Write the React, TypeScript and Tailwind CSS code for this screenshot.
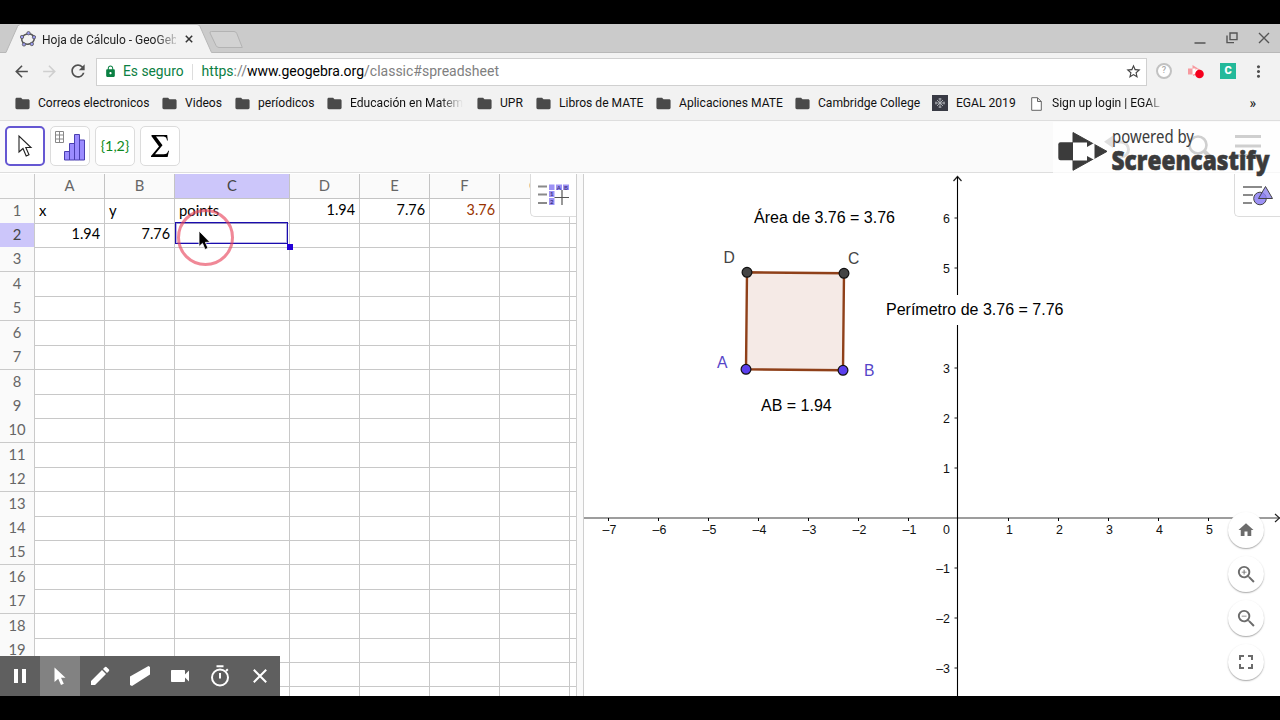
import type { ReactNode } from 'react'
import { MdArrowBack, MdArrowForward, MdFolder, MdFullscreen, MdHome, MdLock, MdMoreVert, MdPause, MdRefresh, MdStarBorder, MdVideocam, MdZoomIn, MdZoomOut } from 'react-icons/md'

const bookmarks = [
    { label: 'Correos electronicos', width: 'w-[147px]' },
    { label: 'Videos', width: 'w-[73px]' },
    { label: 'períodicos', width: 'w-[92px]' },
    { label: 'Educación en Matem', width: 'w-[150px]', fade: true },
    { label: 'UPR', width: 'w-[59px]' },
    { label: 'Libros de MATE', width: 'w-[120px]' },
    { label: 'Aplicaciones MATE', width: 'w-[139px]' },
    { label: 'Cambridge College', width: 'w-[137px]' },
]

const columns = ['A', 'B', 'C', 'D', 'E', 'F', 'G']

const cells: Record<string, { value: string; className?: string }> = {
    A1: { value: 'x' },
    B1: { value: 'y' },
    C1: { value: 'points' },
    D1: { value: '1.94', className: 'justify-end text-[14.4px]' },
    E1: { value: '7.76', className: 'justify-end text-[14.4px]' },
    F1: { value: '3.76', className: 'justify-end text-[14.4px] text-[#993300]' },
    A2: { value: '1.94', className: 'justify-end text-[14.4px]' },
    B2: { value: '7.76', className: 'justify-end text-[14.4px]' },
}

const rowGrid = 'grid grid-cols-[35px_70px_70px_115px_70px_70px_70px_70px_7px]'

// Rows are 24.42px apart; whole-pixel heights keep the grid lines even
const rowHeight = (row: number) => Math.floor(0.1 + 24.42 * row) - Math.floor(0.1 + 24.42 * (row - 1))

function TabStrip() {
    return (
        <div className="relative h-[29px] shrink-0 bg-[#cbcbcb]">
            <svg className="absolute inset-0" width="1280" height="30" viewBox="0 0 1280 30">
                <path d="M0 28.5H6L17.5 2.5Q18.3 .5 20.5 .5H197Q199 .5 200 2.5L211.5 28.5H1280V30H0Z" fill="#f2f2f2" />
                <path d="M0 28.5H6L17.5 2.5Q18.3 .5 20.5 .5H197Q199 .5 200 2.5L211.5 28.5H1280" fill="none" stroke="#b8b8b8" />
                <path d="M211.5 7.5H234Q236 7.5 236.8 9.5L242.3 23.5H219Q217 23.5 216 21.5L210 9Q209.5 7.5 211.5 7.5Z" fill="#d2d2d2" stroke="#b3b3b3" />
            </svg>
            <div className="relative flex h-full items-center pl-5">
                <svg width="16" height="16" viewBox="0 0 16 16" className="shrink-0">
                    <ellipse cx="8" cy="8" rx="6.3" ry="5.2" fill="none" stroke="#555" strokeWidth="1.5" transform="rotate(-12 8 8)" />
                    {[[8.5, 2.2], [14, 6.2], [11.8, 13], [4, 13.4], [2, 6]].map(([x, y]) => (
                        <circle key={x} cx={x} cy={y} r="1.7" fill="#9999ee" stroke="#555" strokeWidth=".8" />
                    ))}
                </svg>
                <span className="ml-[6px] mt-[2px] w-[134px] overflow-hidden whitespace-nowrap text-[12px] text-[#222] [mask-image:linear-gradient(to_right,black_85%,#0003)]">
                    Hoja de Cálculo - GeoGeb
                </span>
                <svg className="ml-[9px] mt-[1px]" width="8" height="8" viewBox="0 0 8 8" stroke="#333" strokeWidth="1.5">
                    <path d="M.8 .8 7.2 7.2M7.2 .8 .8 7.2" />
                </svg>
                <div className="ml-auto flex items-center gap-5 pr-[10px]">
                    <svg width="12" height="12" viewBox="0 0 12 12">
                        <path d="M.5 10H11.5" stroke="#555" strokeWidth="1.5" />
                    </svg>
                    <svg width="12" height="12" viewBox="0 0 12 12" fill="none" stroke="#555" strokeWidth="1.4" className="mb-[2px]">
                        <path d="M4 1H11V7.6H4ZM1 3.5V10.6H8" />
                    </svg>
                    <svg width="12" height="12" viewBox="0 0 12 12" stroke="#555" strokeWidth="1.4" className="mb-[2px]">
                        <path d="M1 1 11 11M11 1 1 11" />
                    </svg>
                </div>
            </div>
        </div>
    )
}

function AddressBar() {
    return (
        <div className="flex h-[36px] shrink-0 items-center bg-[#f2f2f2] pl-3">
            <MdArrowBack size={19} className="text-[#505050]" />
            <MdArrowForward size={19} className="ml-[9px] text-[#cfcfcf]" />
            <MdRefresh size={20} className="ml-[9px] text-[#505050]" />
            <div className="ml-2 mt-px flex h-7 w-[1051px] shrink-0 items-center border border-[#d0d0d0] bg-white pl-[7px] text-[14px]">
                <MdLock size={13} className="text-[#0b8043]" />
                <span className="ml-[6px] text-[13.8px] text-[#0b8043]">Es seguro</span>
                <span className="ml-2 mr-[9px] h-4 w-px bg-[#ddd]" />
                <span className="whitespace-nowrap text-[#808080]">
                    <span className="text-[#0b8043]">https</span>://<span className="text-black">www.geogebra.org</span>/classic#spreadsheet
                </span>
                <MdStarBorder size={17} className="ml-auto mr-[4px] text-[#444]" />
            </div>
            <div className="ml-[9px] flex h-4 w-4 items-center justify-center rounded-full border-2 border-[#c2c2c2] bg-white text-[9px] font-medium text-[#aaa]">?</div>
            <svg className="ml-4" width="17" height="16" viewBox="0 0 17 16">
                <path d="M0 5.5H4.5V2L12.5 7V10L5 13V11.5H0Z" fill="#f79a9f" />
                <path d="M4.5 5.5H7.5V7L9.5 5.5V10L5 11.5H4.5Z" fill="#fff" />
                <circle cx="11.5" cy="11" r="4.3" fill="#f5001d" />
            </svg>
            <div className="ml-[15px] flex h-4 w-4 items-center justify-center bg-[#23b99a] text-[11px] font-black text-white">C</div>
            <MdMoreVert size={19} className="ml-[13px] text-[#505050]" />
        </div>
    )
}

function BookmarksBar() {
    return (
        <div className="flex h-[31px] shrink-0 items-center bg-[#f2f2f2] pb-[2px] pl-[14px] text-[12.1px] text-[#111]">
            {bookmarks.map((b) => (
                <div key={b.label} className={`flex shrink-0 items-center ${b.width}`}>
                    <MdFolder size={17} className="shrink-0 text-[#4a4a4a]" />
                    <span className={`ml-[7px] whitespace-nowrap ${b.fade ? '[mask-image:linear-gradient(to_right,black_80%,transparent)]' : ''}`}>{b.label}</span>
                </div>
            ))}
            <div className="ml-[1px] flex w-[99px] shrink-0 items-center">
                <svg width="16" height="16" viewBox="0 0 16 16">
                    <path d="M0 0H16V16H0Z" fill="#393b45" />
                    <g stroke="#b4b8bc" strokeWidth=".9" fill="none">
                        <path d="M8 3V13M3 8H13M6.5 4H9.5M6.5 12H9.5M4 6.5V9.5M12 6.5V9.5M5 5L11 11M11 5L5 11" />
                    </g>
                </svg>
                <span className="ml-2">EGAL 2019</span>
            </div>
            <svg width="11" height="14" viewBox="0 0 11 14" fill="#fff" stroke="#666">
                <path d="M.7 .7H6.5L10.3 4.5V13.3H.7ZM6.5 .7V4.5H10.3" />
            </svg>
            <span className="ml-[10px] w-[112px] overflow-hidden whitespace-nowrap [mask-image:linear-gradient(to_right,black_85%,transparent)]">Sign up login | EGAL</span>
            <span className="ml-auto pr-[24px] text-[14px]">»</span>
        </div>
    )
}

function ToolButton({ children, active }: { children: ReactNode; active?: boolean }) {
    return (
        <div className={`flex h-10 w-10 items-center justify-center rounded-[5px] bg-white ${active ? 'border-2 border-[#6557d2]' : 'border border-[#dcdcdc]'}`}>
            {children}
        </div>
    )
}

function AppToolbar() {
    return (
        <div className="flex h-[53px] shrink-0 items-center gap-[5px] border-y border-[#dedede] bg-[#fafafa] pb-[2px] pl-[5px]">
            <ToolButton active>
                <svg width="16" height="24" viewBox="0 0 16 24" fill="#fff" stroke="#222" strokeWidth="1.1">
                    <path d="M2 2V18L6 14.5L9.2 22L12 20.8L8.8 13.5H14Z" />
                </svg>
            </ToolButton>
            <ToolButton>
                <svg width="32" height="32" viewBox="0 0 32 32">
                    <path d="M1.5 1.5H9.5V12.5H1.5ZM5.5 1.5V12.5M1.5 5H9.5M1.5 9H9.5" fill="none" stroke="#888" />
                    <path d="M10.5 21.5H15.5V30H10.5ZM15.5 13.5H20.5V30H15.5ZM20.5 4.5H25.5V30H20.5ZM25.5 10H30.5V30H25.5Z" fill="#9b8cff" stroke="#4a3fb0" />
                </svg>
            </ToolButton>
            <ToolButton>
                <span className="font-['Lato',sans-serif] text-[14.3px] text-[#0e8a20]">{'{1,2}'}</span>
            </ToolButton>
            <ToolButton>
                <svg width="20" height="24" viewBox="0 0 20 24">
                    <path d="M1.5 1H17.2L17.8 6.5H17C16.5 3.5 15.5 2.6 12.5 2.6H6L12.5 11.2L5 20.3H13.5C16.5 20.3 17.5 19.2 18.2 16.8H19L17.6 23H1V22L9 12.5L1.5 2.2Z" fill="#000" />
                </svg>
            </ToolButton>
        </div>
    )
}

// Recorder logo lying over the right end of the toolbar, with the toolbar's own icons dimmed under it
function Watermark() {
    return (
        <svg className="absolute left-[1053px] top-[98px]" width="227" height="64" viewBox="0 0 227 64">
            <path d="M0 0H227V52H0Z" fill="#fff" fillOpacity=".75" />
            <g fill="none" stroke="#cfcfcf">
                <path d="M61 20H68A7.5 7.5 0 0 1 68 35H60" stroke="#dedede" strokeWidth="3" />
                <path d="M60 13.5V26L51 19.8Z" fill="#dedede" stroke="none" />
                <circle cx="145" cy="23" r="8.5" strokeWidth="2.6" />
                <path d="M151 29L161 39" strokeWidth="4" />
                <path d="M182 14.5H208M182 24H208M182 33.5H208" strokeWidth="2.8" />
            </g>
            <path d="M20 10.5L54 29.4L20 48.3Z" fill="#3b3b3b" stroke="#3b3b3b" strokeLinejoin="round" />
            <path d="M20 20.5H34V25L41.5 20.8V38L34 34V38.5H20Z" fill="#fff" />
            <path d="M7.5 20.2H20V38.3H7.5Q5.3 38.3 5.3 36V22.5Q5.3 20.2 7.5 20.2Z" fill="#3b3b3b" />
            <g fill="#3b3b3b">
                <text x="59" y="21.2" fontSize="17.5" textLength="82" lengthAdjust="spacingAndGlyphs" fontFamily="Noto Sans, sans-serif">powered by</text>
                <text x="58.5" y="47.8" fontSize="26" fontWeight="800" stroke="#3b3b3b" strokeWidth=".6" textLength="158" lengthAdjust="spacingAndGlyphs" fontFamily="Open Sans, Noto Sans, sans-serif">Screencastify</text>
            </g>
        </svg>
    )
}

function Spreadsheet() {
    return (
        <div className="relative w-[577px] shrink-0 overflow-hidden border-r border-[#cfcfcf] bg-white font-['Lato',sans-serif] text-[14.8px] text-black">
            <div className={`${rowGrid} h-[25px] bg-[#fafafa] text-[#666]`}>
                <span className="border-b border-r border-[#cacaca]" />
                {columns.map((c) => (
                    <span key={c} className={`flex items-center justify-center border-b border-r border-[#c4c4c4] pb-[2px] ${c === 'C' ? 'bg-[#ccc6fa] text-[#444]' : ''}`}>{c}</span>
                ))}
                <span className="border-b border-[#c8c8c8]" />
            </div>
            {Array.from({ length: 21 }, (_, i) => i + 1).map((row) => (
                <div key={row} className={rowGrid} style={{ height: rowHeight(row) }}>
                    <span className={`flex items-center justify-center border-b border-r border-[#cacaca] pb-[2px] ${row === 2 ? 'bg-[#ccc6fa] text-[#444]' : 'bg-[#fafafa] text-[#666]'}`}>{row < 20 ? row : ''}</span>
                    {columns.map((c) => {
                        const cell = cells[c + row]
                        return (
                            <span key={c} className={`flex items-center border-b border-r border-[#c8c8c8] px-1 pb-[2px] ${cell?.className ?? ''}`}>
                                {cell?.value}
                            </span>
                        )
                    })}
                    <span className="border-b border-[#c8c8c8]" />
                </div>
            ))}

            {/* Selected cell, click ring and pointer */}
            <div className="absolute left-[175px] top-[48px] h-[22px] w-[113px] border border-[#1a0cae] outline outline-[#1a0cae]/30 -outline-offset-2" />
            <div className="absolute left-[287px] top-[70px] h-[6px] w-[6px] bg-[#2300d8]" />
            <div className="absolute left-[177px] top-[35px] h-[57px] w-[57px] rounded-full border-[3px] border-[#e84860]/65" />
            <svg className="absolute left-[198px] top-[56px]" width="13" height="21" viewBox="0 0 13 21">
                <path d="M1 1V16.5L4.5 13.3L7 19.5L10 18.2L7.4 12.3H12Z" fill="#000" stroke="#fff" strokeWidth=".8" />
            </svg>
            <div className="absolute right-0 top-0 flex h-[43px] w-[46px] items-center justify-center rounded-bl-[5px] border-b border-l border-[#dcdcdc] bg-white">
                <svg width="32" height="24" viewBox="0 0 32 24">
                    <path d="M0 3.5H9M0 11.5H9M0 20H9" stroke="#8a8a8a" strokeWidth="2" />
                    <path d="M11 1.5H16.5V7H11ZM18 1.5H24V7H18ZM25 1.5H31V7H25ZM11 8H16.5V14H11ZM11 15H16.5V22H11Z" fill="#9d92f5" />
                    <g fontSize="6" fontWeight="700" fill="#3d3689">
                        <text x="18.8" y="6.5">A</text>
                        <text x="26" y="6.5">B</text>
                        <text x="12" y="13.2">1</text>
                        <text x="12" y="20.8">2</text>
                    </g>
                    <path d="M24 7V22M16.5 14.5H31" stroke="#555" strokeWidth="1.2" />
                </svg>
            </div>
        </div>
    )
}

const xTicks = [-7, -6, -5, -4, -3, -2, -1, 1, 2, 3, 4, 5]
const yTicks = [6, 5, 3, 2, 1, -1, -2, -3]
const tickLabel = (n: number) => (n < 0 ? `–${-n}` : `${n}`)

function Graph() {
    // Origin of the axes inside the panel, 50px per unit
    const ox = 373.5
    const oy = 344
    return (
        <svg width="696" height="522" viewBox="0 0 696 522" className="block font-['Liberation_Sans',Arial,sans-serif]">
            <path d={`M0 ${oy}H696`} stroke="#3c3c3c" strokeWidth="1.2" />
            <path d={`M691 ${oy - 4}L695.5 ${oy}L691 ${oy + 4}M${ox - 4} 7L${ox} 2.5L${ox + 4} 7`} fill="none" stroke="#222" strokeWidth="1.2" />
            <path d={`M${ox} 3V121M${ox} 151V522`} stroke="#000" strokeWidth="1.1" />
            <g fontSize="12.4" fill="#111">
                {xTicks.map((n) => (
                    <g key={n}>
                        <path d={`M${ox + 1 + n * 50} ${oy}V${oy + 3}`} stroke="#000" />
                        <text x={ox + 2 + n * 50} y={oy + 16} textAnchor="middle">{tickLabel(n)}</text>
                    </g>
                ))}
                {yTicks.map((n) => (
                    <g key={n}>
                        <path d={`M${ox - 3} ${oy - n * 50}H${ox}`} stroke="#222" />
                        <text x={ox - 7.5} y={oy + 4.5 - n * 50} textAnchor="end">{tickLabel(n)}</text>
                    </g>
                ))}
                <text x={ox - 7.5} y={oy + 16} textAnchor="end">0</text>
            </g>
            <path d="M162 195.3L259 196.3L260 99.3L163 98.3Z" fill="#f5eae6" stroke="#8f4019" strokeWidth="2.4" />
            <g stroke="#111" strokeWidth="1.2">
                <circle cx="162" cy="195.3" r="4.9" fill="#5b3fee" />
                <circle cx="259" cy="196.3" r="4.9" fill="#5b3fee" />
                <circle cx="260" cy="99.3" r="4.9" fill="#444" />
                <circle cx="163" cy="98.3" r="4.9" fill="#444" />
            </g>
            <g fontSize="15.7">
                <text x="139.5" y="88.5" fill="#444">D</text>
                <text x="264" y="89.8" fill="#444">C</text>
                <text x="133" y="193.7" fill="#5645c8">A</text>
                <text x="280" y="201.5" fill="#5645c8">B</text>
            </g>
            <g fontSize="16" fill="#000">
                <text x="170" y="48.5">Área de 3.76 = 3.76</text>
                <text x="302" y="140.5">Perímetro de 3.76 = 7.76</text>
                <text x="177" y="236.5">AB = 1.94</text>
            </g>
        </svg>
    )
}

function GraphPanel() {
    return (
        <div className="relative flex-1 overflow-hidden bg-white">
            <Graph />
            <div className="absolute right-0 top-0 flex h-[43px] w-[46px] items-center rounded-bl-[5px] border-b border-l border-[#dcdcdc] bg-white pl-2">
                <svg width="32" height="24" viewBox="0 0 32 24" stroke="#444">
                    <path d="M0 4H19M0 12H10M0 20H9" stroke="#8a8a8a" strokeWidth="2" />
                    <circle cx="17" cy="15.5" r="6.3" fill="#9d92f5" />
                    <path d="M22.5 3.5L29.5 15.5H15.5Z" fill="#8d82ed" fillOpacity=".8" />
                </svg>
            </div>
            <div className="absolute bottom-[16px] right-[16px] flex flex-col gap-[8px] text-[#6c6c6c]">
                {[MdHome, MdZoomIn, MdZoomOut, MdFullscreen].map((Icon, i) => (
                    <div key={i} className="flex h-9 w-9 items-center justify-center rounded-full bg-white shadow-[0_1px_1.5px_rgba(0,0,0,0.35)]">
                        <Icon size={i === 0 ? 18 : i === 3 ? 24 : 23} />
                    </div>
                ))}
            </div>
        </div>
    )
}

function RecorderBar() {
    const icons = [
        <MdPause size={24} />,
        <svg width="12" height="19" viewBox="0 0 12 19" fill="#fff"><path d="M.5 .5V15L4.2 11.8L7 18L9.8 16.8L7 10.8H11.5Z" /></svg>,
        <svg width="20" height="20" viewBox="0 0 20 20" fill="#fff"><path d="M1 15L12 4L16 8L5 19H1ZM13 3L15 1Q15.7 .5 16.4 1L19 3.6Q19.5 4.3 19 5L17 7Z" /></svg>,
        <svg width="20" height="20" viewBox="0 0 20 20" fill="#fff"><path d="M0 10.5L18.5 0L20 1V8.5L2 20L0 19Z" /></svg>,
        <MdVideocam size={24} />,
        <svg width="20" height="22" viewBox="0 0 20 22" fill="none" stroke="#fff" strokeWidth="2"><circle cx="10" cy="12.5" r="8" /><path d="M6.5 1.2H13.5M10 8V13.5M16 6L17.8 4.2" /></svg>,
        <svg width="14" height="14" viewBox="0 0 14 14" stroke="#fff" strokeWidth="2"><path d="M.8 .8 13.2 13.2M13.2 .8 .8 13.2" /></svg>,
    ]
    return (
        <div className="absolute bottom-0 left-0 flex h-10 w-[280px] bg-[#5f5f5f] text-white">
            {icons.map((icon, i) => (
                <div key={i} className={`flex h-10 w-10 items-center justify-center ${i === 1 ? 'bg-[#828282]' : ''}`}>{icon}</div>
            ))}
        </div>
    )
}

export default function App() {
    return (
        <div className="h-[720px] w-[1280px] overflow-hidden bg-black py-6 font-['Roboto',sans-serif]">
            <div className="relative flex h-[672px] flex-col overflow-hidden bg-white">
                <TabStrip />
                <AddressBar />
                <BookmarksBar />
                <AppToolbar />
                <div className="flex min-h-0 flex-1 pt-px">
                    <Spreadsheet />
                    <div className="w-[7px] shrink-0 border-r border-[#cfcfcf] bg-[#fafafa]" />
                    <GraphPanel />
                </div>
                <Watermark />
                <RecorderBar />
            </div>
        </div>
    )
}
